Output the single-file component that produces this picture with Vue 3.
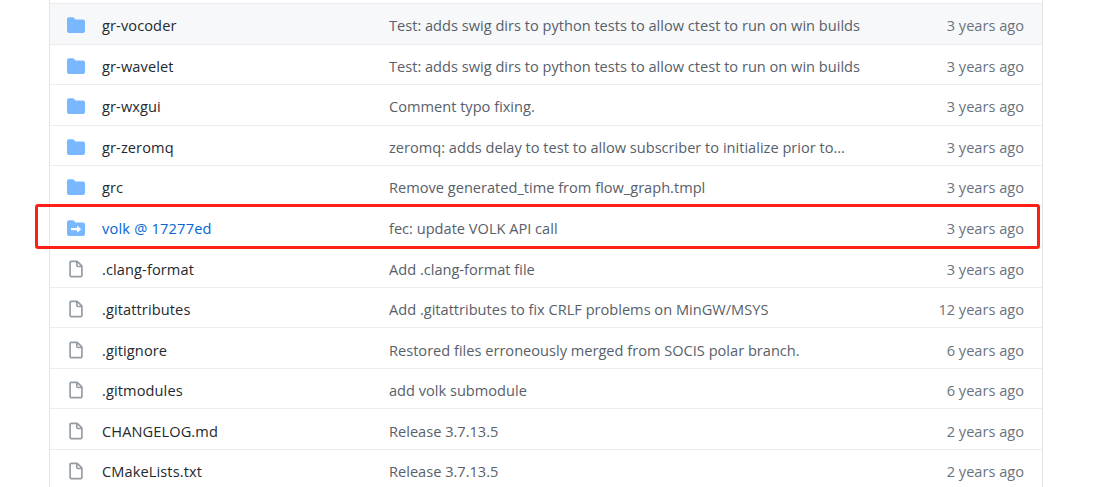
<script setup>
const rows = [
  { t: 'dir', name: 'gr-vocoder', msg: 'Test: adds swig dirs to python tests to allow ctest to run on win builds', age: '3 years ago', hover: true },
  { t: 'dir', name: 'gr-wavelet', msg: 'Test: adds swig dirs to python tests to allow ctest to run on win builds', age: '3 years ago' },
  { t: 'dir', name: 'gr-wxgui', msg: 'Comment typo fixing.', age: '3 years ago' },
  { t: 'dir', name: 'gr-zeromq', msg: 'zeromq: adds delay to test to allow subscriber to initialize prior to…', age: '3 years ago' },
  { t: 'dir', name: 'grc', msg: 'Remove generated_time from flow_graph.tmpl', age: '3 years ago' },
  { t: 'sub', name: 'volk @ 17277ed', msg: 'fec: update VOLK API call', age: '3 years ago' },
  { t: 'file', name: '.clang-format', msg: 'Add .clang-format file', age: '3 years ago' },
  { t: 'file', name: '.gitattributes', msg: 'Add .gitattributes to fix CRLF problems on MinGW/MSYS', age: '12 years ago' },
  { t: 'file', name: '.gitignore', msg: 'Restored files erroneously merged from SOCIS polar branch.', age: '6 years ago' },
  { t: 'file', name: '.gitmodules', msg: 'add volk submodule', age: '6 years ago' },
  { t: 'file', name: 'CHANGELOG.md', msg: 'Release 3.7.13.5', age: '2 years ago' },
  { t: 'file', name: 'CMakeLists.txt', msg: 'Release 3.7.13.5', age: '2 years ago' },
]
</script>

<template>
  <div class="page">
    <div class="box">
      <div v-for="r in rows" :key="r.name" class="row" :class="{ hover: r.hover }">
        <svg v-if="r.t === 'dir'" class="icon" viewBox="0 0 16 16" fill="#79b8ff">
          <path d="M1.75 1A1.75 1.75 0 0 0 0 2.75v10.5C0 14.22.78 15 1.75 15h12.5A1.75 1.75 0 0 0 16 13.25v-8.5A1.75 1.75 0 0 0 14.25 3H7.5a.25.25 0 0 1-.2-.1l-.9-1.2C6.07 1.26 5.55 1 5 1H1.75Z" />
        </svg>
        <svg v-else-if="r.t === 'sub'" class="icon" viewBox="0 0 16 16">
          <path fill="#79b8ff" d="M1.75 1A1.75 1.75 0 0 0 0 2.75v10.5C0 14.22.78 15 1.75 15h12.5A1.75 1.75 0 0 0 16 13.25v-8.5A1.75 1.75 0 0 0 14.25 3H7.5a.25.25 0 0 1-.2-.1l-.9-1.2C6.07 1.26 5.55 1 5 1H1.75Z" />
          <path fill="#fff" d="M9 5.8 12.6 9 9 12.2v-2.3H3.6V8.1H9Z" />
        </svg>
        <svg v-else class="icon" viewBox="0 -0.5 16 16" fill="#959da5">
          <path fill-rule="evenodd" d="M3.75 1.5a.25.25 0 0 0-.25.25v11.5c0 .14.11.25.25.25h8.5a.25.25 0 0 0 .25-.25V6H9.75A1.75 1.75 0 0 1 8 4.25V1.5H3.75Zm5.75.56v2.19c0 .14.11.25.25.25h2.19L9.5 2.06ZM2 1.75C2 .78 2.78 0 3.75 0h5.09c.46 0 .9.18 1.23.51l3.41 3.42c.33.32.52.77.52 1.23v8.09A1.75 1.75 0 0 1 12.25 15h-8.5A1.75 1.75 0 0 1 2 13.25V1.75Z" />
        </svg>
        <span class="name" :class="{ link: r.t === 'sub' }">{{ r.name }}</span>
        <span class="msg">{{ r.msg }}</span>
        <span class="age">{{ r.age }}</span>
      </div>
    </div>
    <div class="mark"></div>
  </div>
</template>

<style>
html, body { margin: 0; background: #fff; overflow: hidden; }
</style>

<style scoped>
.page {
  position: relative;
  width: 1096px;
  height: 487px;
  overflow: hidden;
  background: #fff;
  font-family: "Open Sans", "Noto Sans", sans-serif;
  font-size: 14.6px;
}
.box {
  margin-left: 49px;
  width: 994px;
  box-sizing: border-box;
  padding-top: 3px;
  border-left: 1px solid #e1e4e8;
  border-right: 1px solid #e1e4e8;
  height: 487px;
}
.row {
  height: 40.55px;
  box-sizing: border-box;
  border-top: 1px solid #eaecef;
  display: grid;
  grid-template-columns: 16px 306px 1fr auto;
  align-items: center;
  padding: 3px 18px 0 17px;
}
.hover { background: #f6f8fa; }
.icon { width: 18px; height: 18px; display: block; }
.name { color: #24292e; padding-left: 19px; white-space: nowrap; letter-spacing: 0.1px; }
.link { color: #0366d6; letter-spacing: 0.2px; }
.msg { color: #586069; white-space: nowrap; }
.age { color: #6a737d; white-space: nowrap; }
.mark {
  position: absolute;
  left: 35px;
  top: 204px;
  width: 1005px;
  height: 45px;
  box-sizing: border-box;
  border: 3.5px solid #ff1f17;
  border-radius: 3px;
}
</style>
